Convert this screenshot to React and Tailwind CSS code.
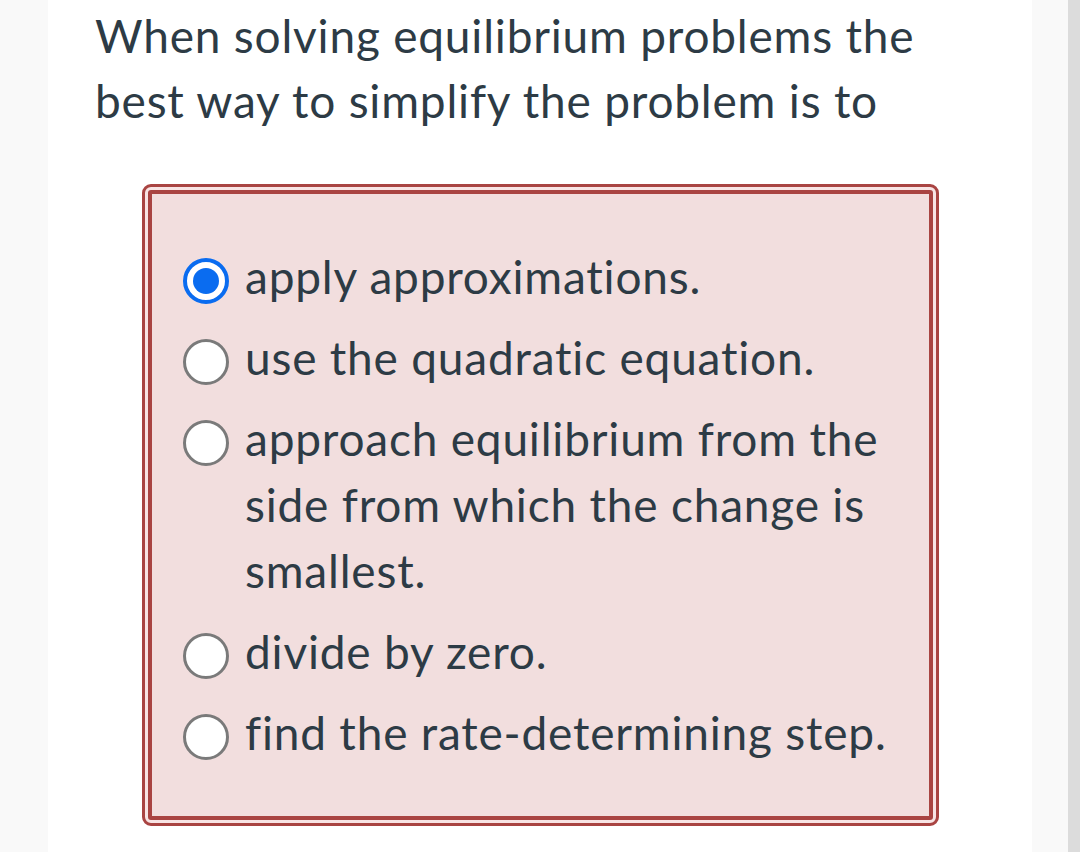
const options = [
  { id: 'a', label: 'apply approximations.', checked: true },
  { id: 'b', label: 'use the quadratic equation.' },
  { id: 'c', label: 'approach equilibrium from the side from which the change is smallest.' },
  { id: 'd', label: 'divide by zero.' },
  { id: 'e', label: 'find the rate-determining step.' },
];

function Radio({ checked }) {
  if (checked) {
    return (
      <span className="mt-[14px] flex h-[46px] w-[46px] shrink-0 items-center justify-center rounded-full border-[4px] border-[#0a6cf0] bg-white">
        <span className="h-[26px] w-[26px] rounded-full bg-[#0a6cf0]" />
      </span>
    );
  }
  return <span className="mt-[14px] h-[46px] w-[46px] shrink-0 rounded-full border-[3px] border-[#7a7a7a] bg-white" />;
}

export default function App() {
  return (
    <div className="flex min-h-[852px] bg-white font-['Lato','Noto_Sans',sans-serif] text-[#2d3b45]">
      <div className="w-[48px] shrink-0 bg-[#f9f9f9]" />
      <div className="w-[984px] shrink-0 bg-white pt-[3px] pl-[47px]">
        <h1 className="w-[860px] text-[46px] leading-[65px] font-normal tracking-[0.8px]">
          When solving equilibrium problems the best way to simplify the problem is to
        </h1>

        {/* answer box */}
        <div className="mt-[51px] ml-[47px] w-[797px] rounded-[9px] border-[3px] border-[#a94442] bg-[#f8e4e4] p-[3px]">
          <div className="rounded-[3px] border-[4px] border-[#a94442] bg-[#f2dede] pt-[50px] pb-[50px] pl-[31px]">
            <div className="flex flex-col gap-[15px]">
              {options.map((opt) => (
                <label key={opt.id} className="flex items-start gap-[16px]">
                  <Radio checked={opt.checked} />
                  <span className="w-[660px] text-[46px] leading-[66px] tracking-[0.8px]">{opt.label}</span>
                </label>
              ))}
            </div>
          </div>
        </div>
      </div>
      <div className="w-[36px] shrink-0 bg-[#f9f9f9]" />
      <div className="w-[12px] shrink-0 bg-[#dcdcdc]" />
    </div>
  );
}
